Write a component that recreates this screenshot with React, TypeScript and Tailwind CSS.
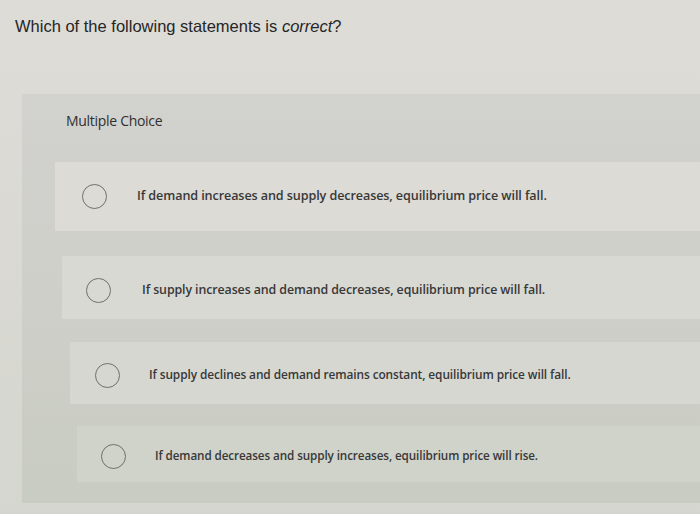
import React from "react";

interface Choice {
  text: string;
  rowClass: string;
  textClass: string;
}

// rows drift right and shrink slightly toward the bottom (photo of a screen)
const choices: Choice[] = [
  {
    text: "If demand increases and supply decreases, equilibrium price will fall.",
    rowClass: "mt-[33px] ml-[33px] h-[69px] pl-[27px] gap-[30px] bg-[#dcdbd6]",
    textClass: "text-[12.6px]",
  },
  {
    text: "If supply increases and demand decreases, equilibrium price will fall.",
    rowClass: "mt-[25px] ml-[40px] h-[63px] pl-[24px] pt-[6px] gap-[31px] bg-[#d9d9d4]",
    textClass: "text-[12.4px]",
  },
  {
    text: "If supply declines and demand remains constant, equilibrium price will fall.",
    rowClass: "mt-[23px] ml-[48px] h-[62px] pl-[25px] pt-[4px] gap-[29px] bg-[#d6d7d1]",
    textClass: "text-[11.9px]",
  },
  {
    text: "If demand decreases and supply increases, equilibrium price will rise.",
    rowClass: "mt-[22px] ml-[55px] h-[56px] pl-[24px] pt-[4px] gap-[29px] bg-[#d0d3ca]",
    textClass: "text-[11.7px]",
  },
];

const RadioCircle: React.FC = () => (
  <span className="block w-[25px] h-[25px] rounded-full border-[1.5px] border-[#6e706e] shrink-0" />
);

const App: React.FC = () => {
  return (
    <div
      className="w-[700px] h-[514px] overflow-hidden bg-gradient-to-b from-[#dedcd7] to-[#d5d6cf] text-[#2b2b2b]"
      style={{ fontFamily: '"Liberation Sans", Arial, sans-serif' }}
    >
      {/* Question */}
      <div className="pt-[15px] pl-[15px] text-[16.5px] leading-[22px] text-[#262626]">
        Which of the following statements is <em>correct</em>?
      </div>

      {/* Answer panel */}
      <div className="mt-[57px] ml-[22px] h-[409px] bg-gradient-to-b from-[#d2d2ce] to-[#c9ccc3]">
        <div className="pt-[19px] pl-[44px] text-[14px] leading-[16px] text-[#303030] [font-family:'Open_Sans',sans-serif] tracking-[-0.3px]">
          Multiple Choice
        </div>

        {choices.map((choice, i) => (
          <div key={i} className={`flex items-center ${choice.rowClass}`}>
            <RadioCircle />
            <span
              className={`${choice.textClass} font-semibold tracking-[-0.1px] text-[#383838] [font-family:'Open_Sans',sans-serif]`}
            >
              {choice.text}
            </span>
          </div>
        ))}
      </div>
    </div>
  );
};

export default App;
